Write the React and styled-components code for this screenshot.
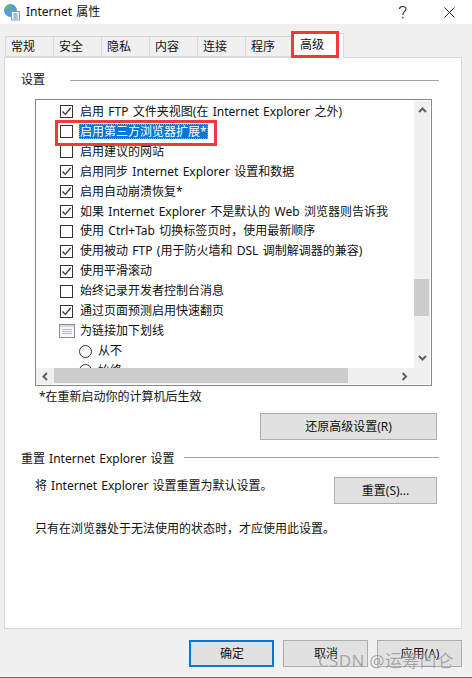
import React from 'react';
import styled, { createGlobalStyle } from 'styled-components';

const Global = createGlobalStyle`
  html, body {
    margin: 0;
    padding: 0;
    background: #f0f0f0;
  }
  * {
    box-sizing: border-box;
  }
`;

const Window = styled.div`
  position: relative;
  width: 472px;
  height: 678px;
  overflow: hidden;
  background: #f0f0f0;
  border-bottom: 1px solid #707070;
  color: #111;
  font-family: "Noto Sans", "Noto Sans CJK SC", sans-serif;
  font-size: 12px;
  line-height: 16px;
`;

const TitleBar = styled.div`
  height: 24px;
  background: #fff;
  display: flex;
  align-items: center;
  padding-left: 3px;
`;

const TitleText = styled.span`
  margin-left: 6px;
  font-size: 12px;
  word-spacing: 1px;
`;

const TitleButton = styled.span`
  display: flex;
  align-items: center;
  justify-content: center;
  width: 46px;
  height: 18px;
  margin-left: ${p => p.$first ? 'auto' : '0'};
`;

const Content = styled.div`
  padding: 9px 10px 0 4px;
`;

const Tabs = styled.div`
  display: flex;
  align-items: flex-end;
  height: 24px;
  padding-left: 1px;
`;

const Tab = styled.div`
  position: relative;
  width: ${p => p.$active ? '51px' : '48px'};
  height: ${p => p.$active ? '25px' : '21px'};
  margin-bottom: ${p => p.$active ? '-1px' : '0'};
  padding: ${p => p.$active ? '3px 0 0 6px' : '2px 0 0 5px'};
  background: ${p => p.$active ? '#fff' : '#f0f0f0'};
  border: 1px solid #d9d9d9;
  border-bottom: ${p => p.$active ? 'none' : '1px solid #d9d9d9'};
  border-right: ${p => p.$active ? '1px solid #d9d9d9' : 'none'};
  z-index: ${p => p.$active ? 1 : 0};
`;

const Panel = styled.div`
  height: 572px;
  background: #fff;
  border: 1px solid #d9d9d9;
  padding: 14px 22px 0 16px;
`;

const GroupTitle = styled.div`
  display: flex;
  align-items: center;
  height: 16px;
  word-spacing: 1px;
  padding-top: ${p => p.$drop || 0}px;
  &::after {
    content: "";
    flex: 1;
    height: 1px;
    margin-left: ${p => p.$gap};
    margin-bottom: ${p => p.$lift || 0}px;
    background: #a0a0a0;
  }
`;

const ListBox = styled.div`
  position: relative;
  width: 397px;
  height: 287px;
  margin: 11px 0 0 14px;
  border: 1px solid #828790;
  overflow: hidden;
  background: #fff;
`;

const Rows = styled.div`
  padding: 2px 0 0 24px;
`;

const Row = styled.div`
  display: flex;
  align-items: center;
  height: 19.93px;
  padding-left: ${p => p.$indent || 0}px;
  white-space: nowrap;
  word-spacing: 1.2px;
`;

const Check = styled.span`
  flex: none;
  display: flex;
  width: 13px;
  height: 13px;
  margin-right: 7px;
  background: #fff;
  border: 1px solid #333;
`;

const Radio = styled.span`
  flex: none;
  width: 13px;
  height: 13px;
  margin-right: 6px;
  border: 1px solid #333;
  border-radius: 50%;
`;

const Label = styled.span`
  ${p => p.$selected && `
    background: #0078d7;
    color: #fff;
    outline: 1px dotted #f09030;
    outline-offset: -1px;
    margin-left: -1px;
    padding: 0 1px;
    height: 15px;
    line-height: 15px;
  `}
`;

const VTrack = styled.div`
  position: absolute;
  top: 1px;
  right: 1px;
  bottom: 17px;
  width: 16px;
  background: #f0f0f0;
  display: flex;
  flex-direction: column;
  align-items: center;
  justify-content: space-between;
  padding: 5px 0;
`;

const VThumb = styled.div`
  position: absolute;
  top: 178px;
  left: 0;
  width: 15px;
  height: 37px;
  background: #cdcdcd;
`;

const HTrack = styled.div`
  position: absolute;
  left: 0;
  right: 1px;
  bottom: 1px;
  height: 16px;
  background: #f0f0f0;
  display: flex;
  align-items: center;
  justify-content: space-between;
  padding: 0 21px 0 5px;
`;

const HThumb = styled.div`
  position: absolute;
  top: 0;
  left: 18px;
  width: 294px;
  height: 15px;
  background: #cdcdcd;
`;

const Note = styled.div`
  margin: 3px 0 0 18px;
`;

const RightButton = styled.div`
  display: flex;
  flex: none;
  align-items: center;
  justify-content: center;
  width: ${p => p.$w}px;
  height: 27px;
  background: #e1e1e1;
  border: 1px solid #adadad;
  word-spacing: 1px;
`;

const RestoreLine = styled.div`
  display: flex;
  justify-content: flex-end;
  margin-top: 8px;
  padding-right: 2px;
`;

const ResetGroup = styled.div`
  margin-top: 10px;
`;

const ResetRow = styled.div`
  display: flex;
  justify-content: space-between;
  padding: 0 2px 0 14px;
  margin-top: 11px;
  word-spacing: 1px;
`;

const ResetText = styled.div`
  padding-top: 1px;
`;

const Hint = styled.div`
  margin: 17px 0 0 14px;
`;

const Footer = styled.div`
  display: flex;
  justify-content: flex-end;
  gap: 9px;
  margin-top: 11px;
`;

const DialogButton = styled.div`
  display: flex;
  align-items: center;
  justify-content: center;
  width: 85px;
  height: 27px;
  padding-left: 1px;
  background: #e1e1e1;
  border: ${p => p.$primary ? '2px solid #0078d7' : '1px solid #adadad'};
`;

const Mark = styled.div`
  position: absolute;
  border: 3px solid #f03a3e;
  pointer-events: none;
  z-index: 2;
`;

const TabMark = styled(Mark)`
  left: 291px;
  top: 31px;
  width: 48px;
  height: 27px;
`;

const RowMark = styled(Mark)`
  left: 55px;
  top: 120px;
  width: 162px;
  height: 26px;
`;

const Watermark = styled.div`
  position: absolute;
  left: 318px;
  top: 651px;
  font-size: 17px;
  line-height: 20px;
  letter-spacing: 0.3px;
  color: rgba(110, 110, 110, 0.6);
  text-shadow: 0 0 1px rgba(255, 255, 255, 0.7);
  white-space: nowrap;
  z-index: 3;
`;

function TickIcon() {
  return (
    <svg width="11" height="11" viewBox="0 0 11 11">
      <path d="M1.5 5.5 L4.3 8.4 L9.6 2" fill="none" stroke="#333" strokeWidth="1.2" />
    </svg>
  );
}

function GlobeIcon() {
  return (
    <svg width="17" height="18" viewBox="0 0 17 18">
      <circle cx="7.5" cy="7.5" r="6.5" fill="#4f9fd8" />
      <path d="M3 3.5 C5 1.5 8 2 9 3.5 C8 5.5 5 5 4.5 7.5 C3 7 2 5 3 3.5 Z" fill="#6fb84f" />
      <path d="M8 8 C10 7 12 8 12.5 10 C11 12 9 12 8 10.5 Z" fill="#6fb84f" />
      <rect x="8.5" y="8.5" width="8" height="8.5" fill="#f4f7fb" stroke="#8a9bb0" />
      <path d="M10.5 11 H14.5 M10.5 13 H14.5 M10.5 15 H14.5" stroke="#4a7fb5" />
    </svg>
  );
}

function GroupIcon() {
  return (
    <svg width="16" height="14" viewBox="0 0 16 14" style={{ flex: 'none', marginRight: 5, marginLeft: -1 }}>
      <rect x="0.5" y="0.5" width="15" height="13" fill="#f4f7fc" stroke="#8c8c8c" />
      <rect x="1" y="1" width="14" height="2" fill="#d5d9de" />
      <path d="M3 5.5 H13 M3 7.5 H13 M3 9.5 H13" stroke="#9cc3e6" />
    </svg>
  );
}

function Chevron({ dir }) {
  const paths = {
    up: 'M1 6 L4.5 2.5 L8 6',
    down: 'M1 2 L4.5 5.5 L8 2',
    left: 'M6 1 L2.5 4.5 L6 8',
    right: 'M2.5 1 L6 4.5 L2.5 8',
  };
  return (
    <svg width="9" height="9" viewBox="0 0 9 9" style={{ position: 'relative' }}>
      <path d={paths[dir]} fill="none" stroke="#606060" strokeWidth="2" />
    </svg>
  );
}

const tabs = ['常规', '安全', '隐私', '内容', '连接', '程序'];

const items = [
  { on: true, text: '启用 FTP 文件夹视图(在 Internet Explorer 之外)' },
  { on: false, text: '启用第三方浏览器扩展*', selected: true },
  { on: false, text: '启用建议的网站' },
  { on: true, text: '启用同步 Internet Explorer 设置和数据' },
  { on: true, text: '启用自动崩溃恢复*' },
  { on: true, text: '如果 Internet Explorer 不是默认的 Web 浏览器则告诉我' },
  { on: false, text: '使用 Ctrl+Tab 切换标签页时，使用最新顺序' },
  { on: true, text: '使用被动 FTP (用于防火墙和 DSL 调制解调器的兼容)' },
  { on: true, text: '使用平滑滚动' },
  { on: false, text: '始终记录开发者控制台消息' },
  { on: true, text: '通过页面预测启用快速翻页' },
];

export default function App() {
  return (
    <Window>
      <Global />
      <TitleBar>
        <GlobeIcon />
        <TitleText>Internet 属性</TitleText>
        <TitleButton $first>
          <svg width="10" height="15" viewBox="0 0 10 15">
            <path d="M1.5 4 C1.5 1 8 0.5 8 4 C8 6.5 4.8 6.5 4.8 10 M4.8 12 V13.5" fill="none" stroke="#222" strokeWidth="1.1" />
          </svg>
        </TitleButton>
        <TitleButton>
          <svg width="11" height="11" viewBox="0 0 11 11">
            <path d="M0.5 0.5 L10.5 10.5 M10.5 0.5 L0.5 10.5" stroke="#222" strokeWidth="1" />
          </svg>
        </TitleButton>
      </TitleBar>

      <Content>
        <Tabs>
          {tabs.map(t => <Tab key={t}>{t}</Tab>)}
          <Tab $active>高级</Tab>
        </Tabs>

        <Panel>
          <GroupTitle $gap="25px">设置</GroupTitle>

          <ListBox>
            <Rows>
              {items.map(item => (
                <Row key={item.text}>
                  <Check>{item.on && <TickIcon />}</Check>
                  <Label $selected={item.selected}>{item.text}</Label>
                </Row>
              ))}
              <Row>
                <GroupIcon />
                <Label>为链接加下划线</Label>
              </Row>
              <Row $indent={19}>
                <Radio />
                <Label>从不</Label>
              </Row>
              <Row $indent={19}>
                <Radio />
                <Label>始终</Label>
              </Row>
            </Rows>
            <VTrack>
              <Chevron dir="up" />
              <VThumb />
              <Chevron dir="down" />
            </VTrack>
            <HTrack>
              <Chevron dir="left" />
              <HThumb />
              <Chevron dir="right" />
            </HTrack>
          </ListBox>

          <Note>*在重新启动你的计算机后生效</Note>

          <RestoreLine>
            <RightButton $w={177}>还原高级设置(R)</RightButton>
          </RestoreLine>

          <ResetGroup>
            <GroupTitle $gap="9px" $drop={2} $lift={3}>重置 Internet Explorer 设置</GroupTitle>
            <ResetRow>
              <ResetText>将 Internet Explorer 设置重置为默认设置。</ResetText>
              <RightButton $w={103}>重置(S)...</RightButton>
            </ResetRow>
            <Hint>只有在浏览器处于无法使用的状态时，才应使用此设置。</Hint>
          </ResetGroup>
        </Panel>

        <Footer>
          <DialogButton $primary>确定</DialogButton>
          <DialogButton>取消</DialogButton>
          <DialogButton>应用(A)</DialogButton>
        </Footer>
      </Content>

      <TabMark />
      <RowMark />
      <Watermark>CSDN @运筹凹仑</Watermark>
    </Window>
  );
}
